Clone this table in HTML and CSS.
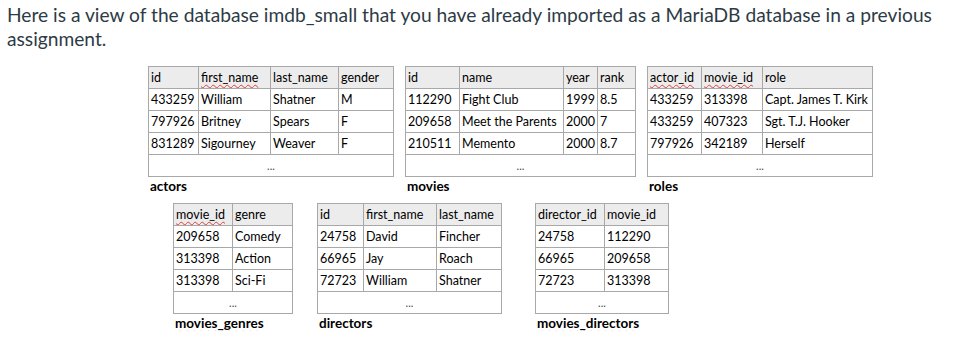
FILE: index.html
```html
<!DOCTYPE html>
<html lang="en">
<head>
<meta charset="utf-8">
<title>imdb_small</title>
<link rel="stylesheet" href="styles.css">
</head>
<body>
<p class="intro">Here is a view of the database imdb_small that you have already imported as a MariaDB database in a previous assignment.</p>
<div class="diagram">
  <div class="row row-top">
    <figure class="tbl">
      <table class="t-actors">
        <colgroup><col class="c1"><col class="c2"><col class="c3"><col class="c4"></colgroup>
        <thead><tr><th>id</th><th><span class="sp">first_name</span></th><th>last_name</th><th>gender</th></tr></thead>
        <tbody>
          <tr><td>433259</td><td>William</td><td>Shatner</td><td>M</td></tr>
          <tr><td>797926</td><td>Britney</td><td>Spears</td><td>F</td></tr>
          <tr><td>831289</td><td>Sigourney</td><td>Weaver</td><td>F</td></tr>
          <tr class="more"><td colspan="4">...</td></tr>
        </tbody>
      </table>
      <figcaption>actors</figcaption>
    </figure>
    <figure class="tbl">
      <table class="t-movies">
        <colgroup><col class="c1"><col class="c2"><col class="c3"><col class="c4"></colgroup>
        <thead><tr><th>id</th><th>name</th><th>year</th><th>rank</th></tr></thead>
        <tbody>
          <tr><td>112290</td><td>Fight Club</td><td>1999</td><td>8.5</td></tr>
          <tr><td>209658</td><td>Meet the Parents</td><td>2000</td><td>7</td></tr>
          <tr><td>210511</td><td>Memento</td><td>2000</td><td>8.7</td></tr>
          <tr class="more"><td colspan="4">...</td></tr>
        </tbody>
      </table>
      <figcaption>movies</figcaption>
    </figure>
    <figure class="tbl">
      <table class="t-roles">
        <colgroup><col class="c1"><col class="c2"><col class="c3"></colgroup>
        <thead><tr><th><span class="sp">actor_id</span></th><th><span class="sp">movie_id</span></th><th>role</th></tr></thead>
        <tbody>
          <tr><td>433259</td><td>313398</td><td>Capt. James T. Kirk</td></tr>
          <tr><td>433259</td><td>407323</td><td>Sgt. T.J. Hooker</td></tr>
          <tr><td>797926</td><td>342189</td><td>Herself</td></tr>
          <tr class="more"><td colspan="3">...</td></tr>
        </tbody>
      </table>
      <figcaption>roles</figcaption>
    </figure>
  </div>
  <div class="row row-bottom">
    <figure class="tbl">
      <table class="t-genres">
        <colgroup><col class="c1"><col class="c2"></colgroup>
        <thead><tr><th><span class="sp">movie_id</span></th><th>genre</th></tr></thead>
        <tbody>
          <tr><td>209658</td><td>Comedy</td></tr>
          <tr><td>313398</td><td>Action</td></tr>
          <tr><td>313398</td><td>Sci-Fi</td></tr>
          <tr class="more"><td colspan="2">...</td></tr>
        </tbody>
      </table>
      <figcaption><span class="sp">movies_genres</span></figcaption>
    </figure>
    <figure class="tbl">
      <table class="t-directors">
        <colgroup><col class="c1"><col class="c2"><col class="c3"></colgroup>
        <thead><tr><th>id</th><th>first_name</th><th>last_name</th></tr></thead>
        <tbody>
          <tr><td>24758</td><td>David</td><td>Fincher</td></tr>
          <tr><td>66965</td><td>Jay</td><td>Roach</td></tr>
          <tr><td>72723</td><td>William</td><td>Shatner</td></tr>
          <tr class="more"><td colspan="3">...</td></tr>
        </tbody>
      </table>
      <figcaption>directors</figcaption>
    </figure>
    <figure class="tbl tbl-md">
      <table class="t-md">
        <colgroup><col class="c1"><col class="c2"></colgroup>
        <thead><tr><th>director_id</th><th>movie_id</th></tr></thead>
        <tbody>
          <tr><td>24758</td><td>112290</td></tr>
          <tr><td>66965</td><td>209658</td></tr>
          <tr><td>72723</td><td>313398</td></tr>
          <tr class="more"><td colspan="2">...</td></tr>
        </tbody>
      </table>
      <figcaption><span class="sp">movies_directors</span></figcaption>
    </figure>
  </div>
</div>
</body>
</html>
```
FILE: styles.css
```css
html, body {
  margin: 0;
  padding: 0;
  background: #ffffff;
}

body {
  font-family: Lato, "Open Sans", sans-serif;
  color: #2d3b45;
}

.intro {
  margin: 0;
  padding: 3px 7px 0;
  font-size: 19.2px;
  line-height: 24px;
}

.diagram {
  padding-top: 15px;
}

.row {
  display: flex;
  align-items: flex-start;
}

.row-top {
  padding-left: 148px;
  gap: 11px;
}

.row-bottom {
  padding-left: 173px;
  gap: 24px;
  margin-top: 9px;
}

.tbl {
  margin: 0;
}

.tbl-md {
  margin-left: 9px;
}

table {
  border-collapse: collapse;
  table-layout: fixed;
  font-family: Lato, "Open Sans", sans-serif;
  font-size: 12.5px;
  color: #000000;
}

th, td {
  border: 1px solid #a8a8a8;
  height: 21px;
  padding: 0 2px;
  text-align: left;
  font-weight: 400;
  white-space: nowrap;
  overflow: hidden;
  vertical-align: middle;
}

thead th {
  background: #ececec;
}

.more td {
  text-align: center;
  color: #4a4a4a;
  font-size: 11px;
}

.sp {
  text-decoration: underline wavy #e04040;
  text-decoration-thickness: 1px;
  text-underline-offset: 2px;
}

figcaption {
  font-weight: 700;
  font-size: 13.5px;
  line-height: 15px;
  color: #000000;
  margin-top: 2px;
  padding-left: 2px;
}

/* column widths */
.t-actors { width: 245px; }
.t-actors .c1 { width: 50px; }
.t-actors .c2 { width: 72px; }
.t-actors .c3 { width: 68px; }
.t-actors .c4 { width: 55px; }

.t-movies { width: 230px; }
.t-movies .c1 { width: 54px; }
.t-movies .c2 { width: 104px; }
.t-movies .c3 { width: 34px; }
.t-movies .c4 { width: 38px; }

.t-roles { width: 225px; }
.t-roles .c1 { width: 54px; }
.t-roles .c2 { width: 61px; }
.t-roles .c3 { width: 110px; }

.t-genres { width: 119px; }
.t-genres .c1 { width: 59px; }
.t-genres .c2 { width: 60px; }

.t-directors { width: 184px; }
.t-directors .c1 { width: 46px; }
.t-directors .c2 { width: 73px; }
.t-directors .c3 { width: 65px; }

.t-md { width: 133px; }
.t-md .c1 { width: 69px; }
.t-md .c2 { width: 64px; }
```
